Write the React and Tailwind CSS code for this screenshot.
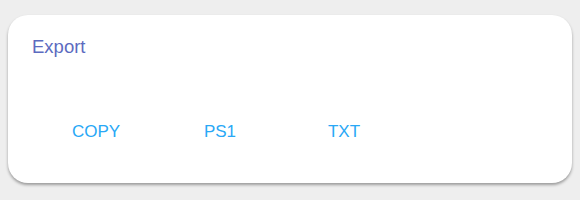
export default function App() {
  const actions = ["COPY", "PS1", "TXT"];

  return (
    <div className="min-h-[200px] w-[580px] bg-[#eeeeee] pt-[15px] px-2 font-['Liberation_Sans',Arial,sans-serif]">
      <div className="h-[168px] rounded-[20px] bg-white px-6 pt-5 shadow-[0_2px_3px_rgba(0,0,0,0.35)]">
        <h2 className="text-[18.5px] leading-6 text-[#5c6bc0]">Export</h2>
        <div className="mt-[55px] ml-[2px] flex">
          {actions.map((label) => (
            <button
              key={label}
              className="h-9 w-[124px] text-center text-[17px] text-[#29a8f6]"
            >
              {label}
            </button>
          ))}
        </div>
      </div>
    </div>
  );
}
